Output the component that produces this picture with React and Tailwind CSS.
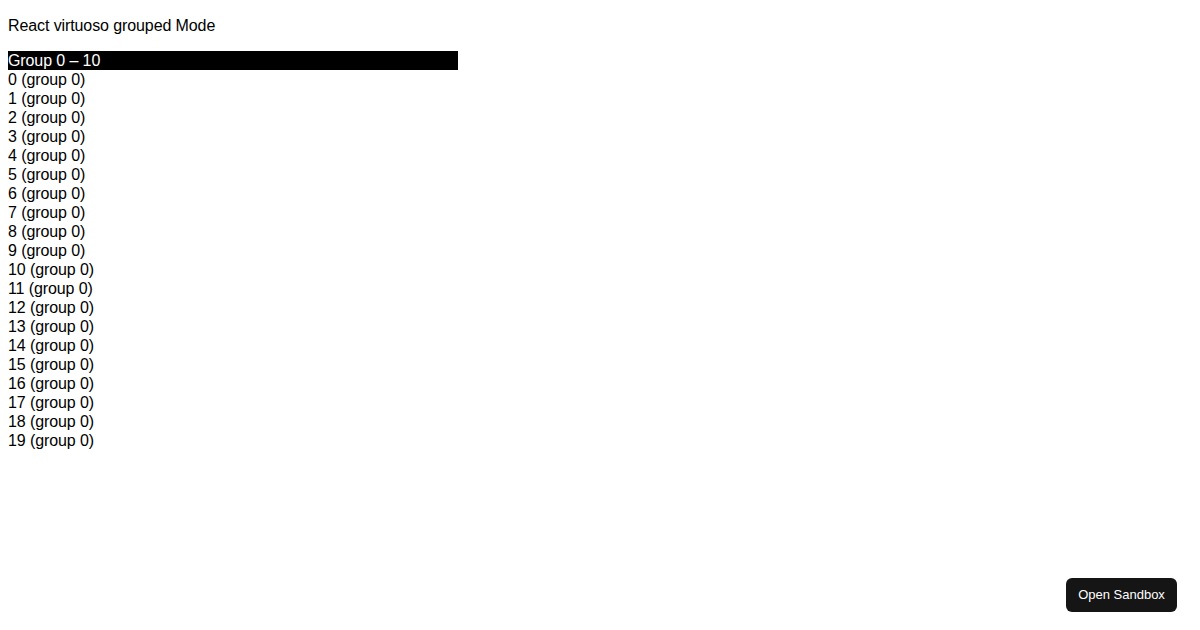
import React from 'react';

const rows = Array.from({ length: 20 }, (_, i) => i);

const App = () => {
  return (
    <div className="min-h-screen bg-white text-black p-2" style={{ fontFamily: '"Liberation Sans", Arial, sans-serif' }}>
      <p className="mt-[9px] text-base leading-[18px] h-[18px] tracking-[-0.1px]">React virtuoso grouped Mode</p>
      <div className="mt-[16px] w-[450px] h-[400px] overflow-hidden text-base tracking-[-0.1px]">
        <div className="h-[19px] leading-[19px] bg-black text-white">Group 0 – 10</div>
        {rows.map((i) => (
          <div key={i} className="h-[19px] leading-[19px]">
            {i} (group 0)
          </div>
        ))}
      </div>

      <button
        className="fixed right-[23px] bottom-[18px] h-[34px] w-[111px] rounded-md bg-[#151515] text-white text-[13px]"
        style={{ fontFamily: '"Liberation Sans", Arial, sans-serif' }}
      >
        Open Sandbox
      </button>
    </div>
  );
};

export default App;
